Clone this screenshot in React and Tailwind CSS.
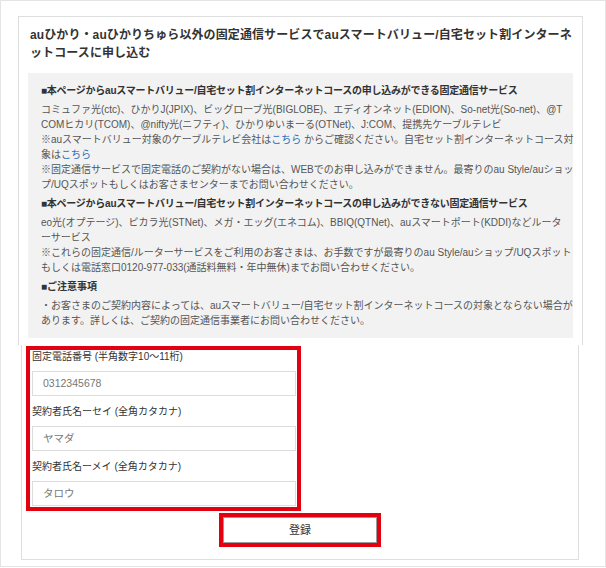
const font = { fontFamily: '"Liberation Sans", "Noto Sans CJK JP", sans-serif' };

const Link = ({ children }) => <span className="text-[#1f6cb8]">{children}</span>;

const Line = ({ children }) => <div className="whitespace-nowrap">{children}</div>;

const Field = ({ label, value, first }) => (
    <div className={first ? "" : "mt-[9px]"}>
        <div className="text-[10px] leading-[14px] text-[#333] whitespace-nowrap">{label}</div>
        <div className="mt-[7px] h-[25px] border border-[#dcdcdc] bg-white flex items-center pl-[10px] text-[10.5px] text-[#777]">
            {value}
        </div>
    </div>
);

const App = () => {
    return (
        <div className="w-[606px] h-[568px] bg-white" style={font}>
            <div className="w-[606px] h-[567px] border border-[#e4e4e4] pt-[15px] pl-[17px]">
                {/* upper card: title and notes */}
                <div className="w-[565px] border-x border-t border-[#dedede] pt-[9px] px-[9px] pb-[7px]">
                    <h1 className="pl-[2px] text-[12px] leading-[18px] font-bold text-[#333] tracking-[0.1px]">
                        <Line>auひかり・auひかりちゅら以外の固定通信サービスでauスマートバリュー/自宅セット割インターネ</Line>
                        <Line>ットコースに申し込む</Line>
                    </h1>

                    <div className="mt-[11px] bg-[#f2f2f2] pt-[10px] pb-[10px] pl-[13px] pr-[10px] text-[10px] leading-[15px] text-[#555]">
                        <p className="font-bold text-[#333] tracking-[-0.25px] whitespace-nowrap">■本ページからauスマートバリュー/自宅セット割インターネットコースの申し込みができる固定通信サービス</p>
                        <div className="mt-[4px]">
                            <Line>コミュファ光(ctc)、ひかりJ(JPIX)、ビッグローブ光(BIGLOBE)、エディオンネット(EDION)、So-net光(So-net)、@T</Line>
                            <Line>COMヒカリ(TCOM)、@nifty光(ニフティ)、ひかりゆいまーる(OTNet)、J:COM、提携先ケーブルテレビ</Line>
                            <Line>※auスマートバリュー対象のケーブルテレビ会社は<Link>こちら</Link> からご確認ください。自宅セット割インターネットコース対</Line>
                            <Line>象は<Link>こちら</Link></Line>
                            <Line>※固定通信サービスで固定電話のご契約がない場合は、WEBでのお申し込みができません。最寄りのau Style/auショッ</Line>
                            <Line>プ/UQスポットもしくはお客さまセンターまでお問い合わせください。</Line>
                        </div>

                        <p className="mt-[4px] font-bold text-[#333] tracking-[-0.25px] whitespace-nowrap">■本ページからauスマートバリュー/自宅セット割インターネットコースの申し込みができない固定通信サービス</p>
                        <div className="mt-[4px]">
                            <Line>eo光(オプテージ)、ピカラ光(STNet)、メガ・エッグ(エネコム)、BBIQ(QTNet)、auスマートポート(KDDI)などルータ</Line>
                            <Line>ーサービス</Line>
                            <Line>※これらの固定通信/ルーターサービスをご利用のお客さまは、お手数ですが最寄りのau Style/auショップ/UQスポット</Line>
                            <Line>もしくは電話窓口0120-977-033(通話料無料・年中無休)までお問い合わせください。</Line>
                        </div>

                        <p className="mt-[4px] font-bold text-[#333]">■ご注意事項</p>
                        <div className="mt-[4px]">
                            <Line>・お客さまのご契約内容によっては、auスマートバリュー/自宅セット割インターネットコースの対象とならない場合が</Line>
                            <Line>あります。詳しくは、ご契約の固定通信事業者にお問い合わせください。</Line>
                        </div>
                    </div>
                </div>

                {/* lower card: form */}
                <div className="ml-[3px] w-[558px] border-x border-b border-[#dedede] pt-[1px] pb-[12px]">
                    <div className="ml-[4px] w-[275px] border-4 border-[#e3000f] pl-[2px] pr-[1px] pb-[1px]">
                        <Field first label="固定電話番号 (半角数字10～11桁)" value="0312345678" />
                        <Field label="契約者氏名ーセイ (全角カタカナ)" value="ヤマダ" />
                        <Field label="契約者氏名ーメイ (全角カタカナ)" value="タロウ" />
                    </div>

                    <div className="mt-[2px] flex justify-center">
                        <div className="w-[162px] border-4 border-[#e3000f]">
                            <button className="w-full h-[26px] border border-[#9a9a9a] bg-white text-[11px] text-[#333]">
                                登録
                            </button>
                        </div>
                    </div>
                </div>
            </div>
        </div>
    );
};

export default App;
